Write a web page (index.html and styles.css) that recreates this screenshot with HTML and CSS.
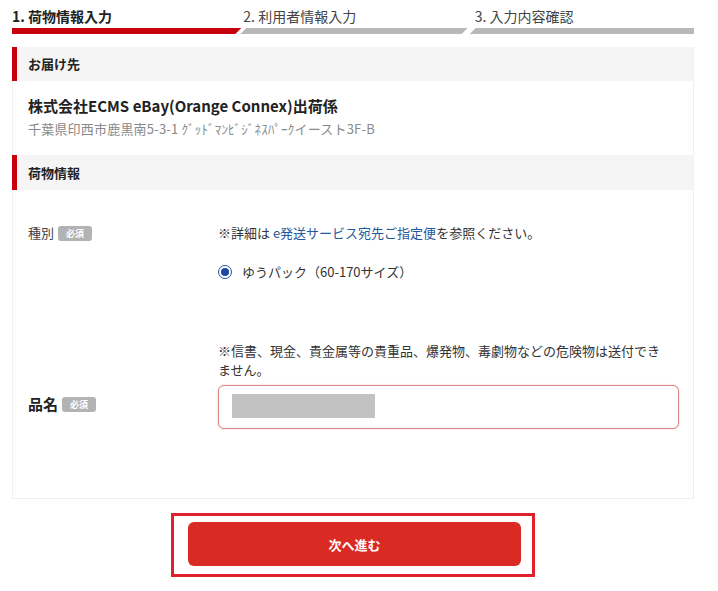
FILE: index.html
```html
<!DOCTYPE html>
<html lang="ja">
<head>
<meta charset="utf-8">
<title>荷物情報入力</title>
<link rel="stylesheet" href="styles.css">
</head>
<body>
<div class="page">
  <div class="steps">
    <div class="step step-first active">
      <div class="step-label">1. 荷物情報入力</div>
      <div class="step-bar"></div>
    </div>
    <div class="step step-mid">
      <div class="step-label">2. 利用者情報入力</div>
      <div class="step-bar"></div>
    </div>
    <div class="step step-last">
      <div class="step-label">3. 入力内容確認</div>
      <div class="step-bar"></div>
    </div>
  </div>

  <div class="card">
    <div class="sec-head">お届け先</div>
    <div class="dest">
      <div class="dest-name">株式会社ECMS eBay(Orange Connex)出荷係</div>
      <div class="dest-addr">千葉県印西市鹿黒南5-3-1 ｸﾞｯﾄﾞﾏﾝﾋﾞｼﾞﾈｽﾊﾟｰｸイースト3F-B</div>
    </div>
    <div class="sec-head sec-head-2">荷物情報</div>
    <div class="form">
      <div class="row row-kind">
        <div class="label label-top">種別<span class="badge">必須</span></div>
        <div class="content">
          <div class="note">※詳細は <a class="link" href="#">e発送サービス宛先ご指定便</a>を参照ください。</div>
          <label class="radio-line"><span class="radio"></span>ゆうパック（60-170サイズ）</label>
        </div>
      </div>
      <div class="row row-name">
        <div class="note note-warn">※信書、現金、貴金属等の貴重品、爆発物、毒劇物などの危険物は送付でき<br>ません。</div>
        <div class="label label-bold">品名<span class="badge">必須</span></div>
        <div class="input"><span class="input-mask"></span></div>
      </div>
    </div>
  </div>

  <div class="actions">
    <div class="highlight">
      <button class="next-btn" type="button">次へ進む</button>
    </div>
  </div>
</div>
</body>
</html>
```

FILE: styles.css
```css
* { box-sizing: border-box; }
html, body { margin: 0; padding: 0; background: #fff; }
body {
  font-family: "Noto Sans CJK JP", "Noto Sans", sans-serif;
  color: #333;
  font-size: 13px;
}
.page {
  width: 682px;
  margin-left: 12px;
}

/* steps */
.steps {
  display: flex;
  padding-top: 8px;
}
.step { flex: 1 1 0; }
.step-label {
  font-size: 14px;
  line-height: 16px;
  color: #444;
  white-space: nowrap;
}
.step-mid .step-label { padding-left: 4px; }
.step-last .step-label { padding-left: 8px; }
.active .step-label { font-weight: 700; color: #222; }
.step-bar {
  height: 6px;
  margin-top: 4px;
  background: #b8b8b8;
}
.step-first .step-bar {
  background: #c8000b;
  margin-right: -2px;
  clip-path: polygon(0 0, 100% 0, calc(100% - 6px) 100%, 0 100%);
}
.step-mid .step-bar {
  margin-left: 1px;
  margin-right: -1px;
  clip-path: polygon(6px 0, 100% 0, calc(100% - 6px) 100%, 0 100%);
}
.step-last .step-bar {
  margin-left: 3px;
  clip-path: polygon(6px 0, 100% 0, 100% 100%, 0 100%);
}

/* card */
.card {
  margin-top: 13px;
  border: 1px solid #f0f0f0;
  border-top: none;
  background: #fff;
}
.sec-head {
  height: 34px;
  background: #f5f5f5;
  border-left: 5px solid #c8000b;
  margin-left: -1px;
  padding-left: 11px;
  font-size: 13px;
  font-weight: 700;
  line-height: 34px;
  color: #222;
}
.sec-head-2 { height: 35px; line-height: 35px; }
.dest {
  padding: 15px 16px 16px 15px;
}
.dest-name {
  font-size: 15px;
  font-weight: 700;
  line-height: 20px;
  color: #222;
}
.dest-addr {
  font-size: 13px;
  line-height: 20px;
  margin-top: 3px;
  color: #8a8a8a;
  white-space: nowrap;
  letter-spacing: 0.2px;
}

/* form */
.form {
  padding: 33px 14px 69px 15px;
}
.row {
  display: grid;
  grid-template-columns: 190px 1fr;
}
.label {
  font-size: 13px;
  line-height: 20px;
  color: #444;
  display: flex;
  align-items: center;
}
.label-top {
  align-self: start;
  height: 20px;
}
.label-bold {
  font-size: 15px;
  font-weight: 700;
  color: #222;
}
.badge {
  display: inline-block;
  margin-left: 4px;
  width: 34px;
  height: 15px;
  line-height: 15px;
  text-align: center;
  border-radius: 3px;
  background: #b3b3b3;
  color: #fff;
  font-size: 9px;
  font-weight: 700;
}
.note {
  font-size: 13px;
  line-height: 20px;
  color: #333;
}
.link {
  color: #1f5a9e;
  text-decoration: none;
}
.radio-line {
  display: flex;
  align-items: center;
  margin-top: 19px;
  font-size: 13px;
  line-height: 20px;
  color: #333;
}
.radio {
  width: 14px;
  height: 14px;
  border: 1.5px solid #2a55a0;
  border-radius: 50%;
  margin-right: 10px;
  display: inline-flex;
  align-items: center;
  justify-content: center;
  background: #fff;
}
.radio::after {
  content: "";
  width: 8px;
  height: 8px;
  border-radius: 50%;
  background: #1c4aa0;
}

.row-name {
  margin-top: 59px;
  grid-template-rows: auto auto;
}
.note-warn {
  grid-column: 2;
  grid-row: 1;
  line-height: 19px;
}
.row-name .label {
  grid-column: 1;
  grid-row: 2;
}
.input {
  grid-column: 2;
  grid-row: 2;
  margin-top: 6px;
  height: 44px;
  border: 1.5px solid #d98585;
  border-radius: 6px;
  box-shadow: 0 0 2px rgba(220, 90, 90, 0.35);
  padding: 8px 0 0 13px;
  background: #fff;
}
.input-mask {
  display: block;
  width: 143px;
  height: 24px;
  background: #c2c2c2;
}

/* actions */
.actions {
  display: flex;
  justify-content: center;
  padding-top: 14px;
}
.highlight {
  width: 364px;
  border: 3px solid #e0202c;
  padding: 6px 11px 8px 14px;
}
.next-btn {
  display: block;
  width: 100%;
  height: 44px;
  border: none;
  border-radius: 6px;
  background: #d92a24;
  color: #fff;
  font-family: "Noto Sans CJK JP", "Noto Sans", sans-serif;
  font-size: 13px;
  font-weight: 700;
  cursor: pointer;
}
```
